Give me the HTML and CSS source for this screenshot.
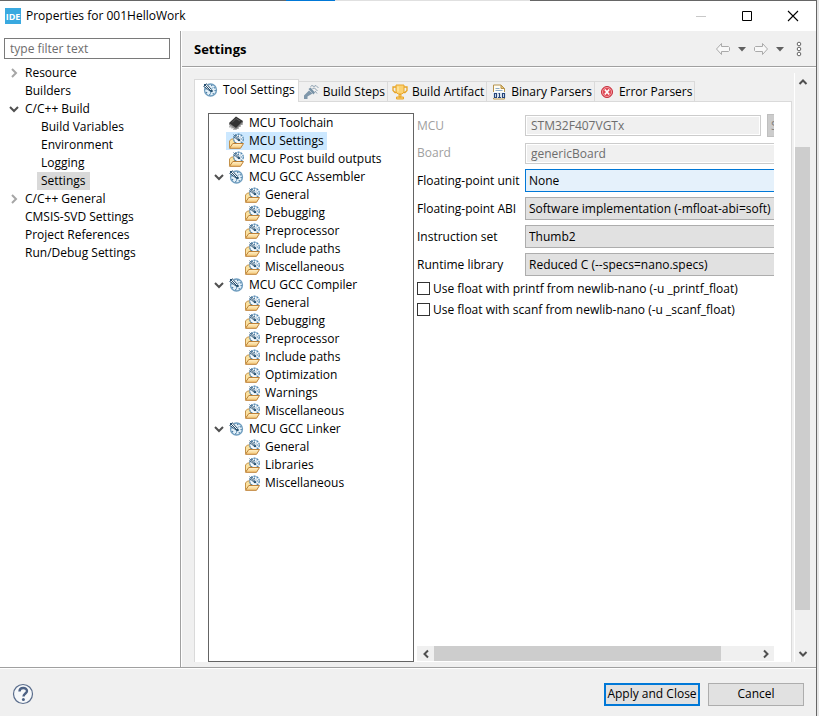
FILE: index.html
```html
<!DOCTYPE html>
<html lang="en">
<head>
    <meta charset="UTF-8">
    <meta name="viewport" content="width=device-width, initial-scale=1.0">
    <title>Properties for 001HelloWork</title>
    <link rel="stylesheet" href="styles.css">
</head>
<body>
    <!-- Icon definitions -->
    <svg class="defs" aria-hidden="true">
        <linearGradient id="paper" x1="0" y1="0" x2="0" y2="1">
            <stop offset="0" stop-color="#fff3cf"/>
            <stop offset="1" stop-color="#f6c876"/>
        </linearGradient>
        <symbol id="open" viewBox="0 0 10 10"><path d="M1 3l4 4 4-4" fill="none" stroke="#505050" stroke-width="2"/></symbol>
        <symbol id="closed" viewBox="0 0 10 10"><path d="M3 1l4 4-4 4" fill="none" stroke="#a6a6a6" stroke-width="2"/></symbol>
        <symbol id="up" viewBox="0 0 10 10"><path d="M1.500 7L5 3.500 8.500 7" fill="none" stroke="#505050" stroke-width="2"/></symbol>
        <symbol id="down" viewBox="0 0 10 10"><path d="M1.500 3L5 6.500 8.500 3" fill="none" stroke="#505050" stroke-width="2"/></symbol>
        <symbol id="left" viewBox="0 0 10 10"><path d="M7 1.500L3.500 5 7 8.500" fill="none" stroke="#505050" stroke-width="2"/></symbol>
        <symbol id="right" viewBox="0 0 10 10"><path d="M3 1.500L6.500 5 3 8.500" fill="none" stroke="#505050" stroke-width="2"/></symbol>
        <symbol id="caret" viewBox="0 0 8 5"><path d="M0 0h8L4 4.500z" fill="#606060"/></symbol>
        <symbol id="tool" viewBox="0 0 16 16">
            <circle cx="8.500" cy="8" r="6" fill="#e3f0f8" stroke="#6f9dbf" stroke-width="1.300"/>
            <circle cx="8.500" cy="8" r="4.700" fill="none" stroke="#4c7ea6" stroke-width="1.300" stroke-dasharray="1.200 2.500"/>
            <path d="M8.500 8l3-3M8.500 8v4" stroke="#7ba6c6"/>
            <path d="M1.500 1.500h3.500l5 6-1.500 1.500-7-5z" fill="#f4f8fa"/>
            <path d="M1.500 4.500l3-3M2 2l7.500 7.500M4.500 2l5 5.500M2 4.500l6 4.500" stroke="#274f70" fill="none"/>
            <circle cx="9.500" cy="9" r="1.300" fill="#24506f"/>
        </symbol>
        <symbol id="folder" viewBox="0 0 16 16">
            <path d="M1.500 14.500V8l2-2h3v7z" fill="#fbe2a1" stroke="#c4924a"/>
            <circle cx="10.500" cy="6" r="4.800" fill="#f4f9fd" stroke="#4881ad" stroke-width="1.200" stroke-dasharray="2.200 .8"/>
            <path d="M10.500 2.500V4M14 6h-1.500M13 3.500l-1 1M13 8.500l-1-1" stroke="#4c7ea6"/>
            <path d="M5.500 1.500l5.500 6M7.500 1.500l4 5M5.500 3.500l5 4" stroke="#274f70" stroke-width=".8"/>
            <circle cx="11" cy="7.200" r="1.100" fill="#24506f"/>
            <path d="M1.500 15.300l3.300-4.800h10.700l-3 4.800z" fill="url(#paper)" stroke="#bd8035"/>
        </symbol>
        <symbol id="chip" viewBox="0 0 16 16">
            <path d="M1 8v2l7 5 7-7V6z" fill="#8c8c8c"/>
            <path d="M1 8l7-6.500L15 6l-7 7z" fill="#343434"/>
            <path d="M4 7.500l4-4L12 6" fill="none" stroke="#626262"/>
            <path d="M2 11v1.500M4 12v1.500M6 13.500V15M10 12.500V14M12 10.500V12M14 8.500V10" stroke="#777"/>
        </symbol>
        <symbol id="steps" viewBox="0 0 16 16">
            <path d="M1 11.500l5-5 3.500 3-5 3v2.500H1z" fill="#7f97aa"/>
            <path d="M5.500 5l2-1.500 4.500 5-1.500 2z" fill="#7892a6"/>
            <path d="M7.500 2.500l1.500-1 2 1 2-1 2.500 2.500M9.500 4.500l2-.5 3 3M12 7l2 2.500" fill="none" stroke="#8da1b1"/>
        </symbol>
        <symbol id="trophy" viewBox="0 0 16 16">
            <path d="M4 3H1v3.500l2 2h2M12 3h3v3.500l-2 2h-2" fill="none" stroke="#e6a425" stroke-width="1.300"/>
            <path d="M4 1h8v7l-2 2H6L4 8z" fill="#fbd272" stroke="#e9a62a"/>
            <path d="M7 10.500h2v2.500H7zM4.500 13h7v2h-7z" fill="#fbd272" stroke="#e9a62a"/>
            <path d="M6 2.500v5" stroke="#fff0b8"/>
        </symbol>
        <symbol id="binary" viewBox="0 0 16 16">
            <path d="M2.500 1h7.500l3.500 3.500V15h-11z" fill="#fffdf4" stroke="#b7944d"/>
            <path d="M10 1v3.500h3.500z" fill="#eac877" stroke="#b7944d"/>
            <path d="M4.500 4.500h4M4.500 6.500h7" stroke="#8eabc8"/>
            <path d="M2 8h13v6H2z" fill="#edf3fa"/>
            <path d="M3.500 9.500h2v4h-2zM11.500 9.500h2v4h-2zM7.500 9.500h1V14M7 13.500h3" fill="none" stroke="#26457a" stroke-width="1.200"/>
        </symbol>
        <symbol id="error" viewBox="0 0 16 16">
            <circle cx="8" cy="8" r="5.500" fill="#df4652" stroke="#c5303d"/>
            <circle cx="8" cy="8" r="4.500" fill="none" stroke="#f39aa0"/>
            <path d="M5.800 5.500l4.400 5M10.200 5.500l-4.400 5" stroke="#fff" stroke-width="1.700"/>
        </symbol>
    </svg>

    <div class="window">
        <div class="top-edge"></div>

        <header class="titlebar">
            <svg class="logo" viewBox="0 0 16 16">
                <rect width="16" height="16" fill="#39a9e0"/>
                <text x="8" y="12" text-anchor="middle">IDE</text>
            </svg>
            <h1>Properties for 001HelloWork</h1>
            <button class="win-btn" aria-label="Minimize" disabled><svg viewBox="0 0 12 12"><path d="M1 6.500h10" stroke="#c8c8c8"/></svg></button>
            <button class="win-btn" aria-label="Maximize"><svg viewBox="0 0 12 12"><path d="M1.500 1.500h9v9h-9z" fill="none" stroke="#000"/></svg></button>
            <button class="win-btn" aria-label="Close"><svg viewBox="0 0 12 12"><path d="M1 1l10 10M11 1L1 11" stroke="#000" stroke-width="1.100"/></svg></button>
        </header>

        <div class="content">
            <nav class="sidebar">
                <input class="filter" type="text" placeholder="type filter text" aria-label="Filter">
                <ul class="tree pages">
                    <li><div class="row"><svg class="toggle"><use href="#closed"/></svg><a class="item" href="#">Resource</a></div></li>
                    <li><div class="row"><span class="toggle"></span><a class="item" href="#">Builders</a></div></li>
                    <li>
                        <div class="row"><svg class="toggle"><use href="#open"/></svg><a class="item" href="#">C/C++ Build</a></div>
                        <ul>
                            <li><div class="row"><span class="toggle"></span><a class="item" href="#">Build Variables</a></div></li>
                            <li><div class="row"><span class="toggle"></span><a class="item" href="#">Environment</a></div></li>
                            <li><div class="row"><span class="toggle"></span><a class="item" href="#">Logging</a></div></li>
                            <li><div class="row"><span class="toggle"></span><a class="item current" href="#">Settings</a></div></li>
                        </ul>
                    </li>
                    <li><div class="row"><svg class="toggle"><use href="#closed"/></svg><a class="item" href="#">C/C++ General</a></div></li>
                    <li><div class="row"><span class="toggle"></span><a class="item" href="#">CMSIS-SVD Settings</a></div></li>
                    <li><div class="row"><span class="toggle"></span><a class="item" href="#">Project References</a></div></li>
                    <li><div class="row"><span class="toggle"></span><a class="item" href="#">Run/Debug Settings</a></div></li>
                </ul>
            </nav>

            <main class="main">
                <div class="page-header">
                    <h2>Settings</h2>
                    <div class="history">
                        <button aria-label="Back"><svg width="16" height="14" viewBox="0 0 16 14"><path d="M1.500 7l5-5.500v3h7l1 1v3l-1 1h-7v3z" fill="#f8f8f8" stroke="#aaa"/></svg></button>
                        <button aria-label="Back history"><svg width="8" height="5"><use href="#caret"/></svg></button>
                        <button aria-label="Forward"><svg width="16" height="14" viewBox="0 0 16 14"><path d="M14.500 7l-5-5.500v3h-7l-1 1v3l1 1h7v3z" fill="#f8f8f8" stroke="#aaa"/></svg></button>
                        <button aria-label="Forward history"><svg width="8" height="5"><use href="#caret"/></svg></button>
                        <button class="more" aria-label="View menu"><svg width="6" height="16" viewBox="0 0 6 16"><g fill="#fff" stroke="#666"><circle cx="3" cy="3" r="1.800"/><circle cx="3" cy="8" r="1.800"/><circle cx="3" cy="13" r="1.800"/></g></svg></button>
                    </div>
                </div>

                <div class="page-body">
                    <section class="notebook">
                        <div class="tabs" role="tablist">
                            <button class="tab active" role="tab" aria-selected="true"><svg><use href="#tool"/></svg>Tool Settings</button>
                            <button class="tab" role="tab"><svg><use href="#steps"/></svg>Build Steps</button>
                            <button class="tab" role="tab"><svg><use href="#trophy"/></svg>Build Artifact</button>
                            <button class="tab" role="tab"><svg><use href="#binary"/></svg>Binary Parsers</button>
                            <button class="tab" role="tab"><svg><use href="#error"/></svg>Error Parsers</button>
                        </div>

                        <div class="panel">
                            <ul class="tree tools">
                                <li><div class="row"><span class="toggle"></span><a class="item" href="#"><svg><use href="#chip"/></svg>MCU Toolchain</a></div></li>
                                <li><div class="row"><span class="toggle"></span><a class="item selected" href="#"><svg><use href="#folder"/></svg>MCU Settings</a></div></li>
                                <li><div class="row"><span class="toggle"></span><a class="item" href="#"><svg><use href="#folder"/></svg>MCU Post build outputs</a></div></li>
                                <li>
                                    <div class="row"><svg class="toggle"><use href="#open"/></svg><a class="item" href="#"><svg><use href="#tool"/></svg>MCU GCC Assembler</a></div>
                                    <ul>
                                        <li><div class="row"><span class="toggle"></span><a class="item" href="#"><svg><use href="#folder"/></svg>General</a></div></li>
                                        <li><div class="row"><span class="toggle"></span><a class="item" href="#"><svg><use href="#folder"/></svg>Debugging</a></div></li>
                                        <li><div class="row"><span class="toggle"></span><a class="item" href="#"><svg><use href="#folder"/></svg>Preprocessor</a></div></li>
                                        <li><div class="row"><span class="toggle"></span><a class="item" href="#"><svg><use href="#folder"/></svg>Include paths</a></div></li>
                                        <li><div class="row"><span class="toggle"></span><a class="item" href="#"><svg><use href="#folder"/></svg>Miscellaneous</a></div></li>
                                    </ul>
                                </li>
                                <li>
                                    <div class="row"><svg class="toggle"><use href="#open"/></svg><a class="item" href="#"><svg><use href="#tool"/></svg>MCU GCC Compiler</a></div>
                                    <ul>
                                        <li><div class="row"><span class="toggle"></span><a class="item" href="#"><svg><use href="#folder"/></svg>General</a></div></li>
                                        <li><div class="row"><span class="toggle"></span><a class="item" href="#"><svg><use href="#folder"/></svg>Debugging</a></div></li>
                                        <li><div class="row"><span class="toggle"></span><a class="item" href="#"><svg><use href="#folder"/></svg>Preprocessor</a></div></li>
                                        <li><div class="row"><span class="toggle"></span><a class="item" href="#"><svg><use href="#folder"/></svg>Include paths</a></div></li>
                                        <li><div class="row"><span class="toggle"></span><a class="item" href="#"><svg><use href="#folder"/></svg>Optimization</a></div></li>
                                        <li><div class="row"><span class="toggle"></span><a class="item" href="#"><svg><use href="#folder"/></svg>Warnings</a></div></li>
                                        <li><div class="row"><span class="toggle"></span><a class="item" href="#"><svg><use href="#folder"/></svg>Miscellaneous</a></div></li>
                                    </ul>
                                </li>
                                <li>
                                    <div class="row"><svg class="toggle"><use href="#open"/></svg><a class="item" href="#"><svg><use href="#tool"/></svg>MCU GCC Linker</a></div>
                                    <ul>
                                        <li><div class="row"><span class="toggle"></span><a class="item" href="#"><svg><use href="#folder"/></svg>General</a></div></li>
                                        <li><div class="row"><span class="toggle"></span><a class="item" href="#"><svg><use href="#folder"/></svg>Libraries</a></div></li>
                                        <li><div class="row"><span class="toggle"></span><a class="item" href="#"><svg><use href="#folder"/></svg>Miscellaneous</a></div></li>
                                    </ul>
                                </li>
                            </ul>

                            <div class="options">
                                <form class="form">
                                    <div class="fields">
                                        <label class="dim" for="mcu">MCU</label>
                                        <div class="with-button">
                                            <input id="mcu" type="text" value="STM32F407VGTx" disabled>
                                            <button type="button" disabled>Select</button>
                                        </div>
                                        <label class="dim" for="board">Board</label>
                                        <input id="board" type="text" value="genericBoard" disabled>
                                        <label for="fpu">Floating-point unit</label>
                                        <select id="fpu" class="hot"><option>None</option></select>
                                        <label for="abi">Floating-point ABI</label>
                                        <select id="abi"><option>Software implementation (-mfloat-abi=soft)</option></select>
                                        <label for="iset">Instruction set</label>
                                        <select id="iset"><option>Thumb2</option></select>
                                        <label for="runtime">Runtime library</label>
                                        <select id="runtime"><option>Reduced C (--specs=nano.specs)</option></select>
                                    </div>
                                    <label class="check"><input type="checkbox">Use float with printf from newlib-nano (-u _printf_float)</label>
                                    <label class="check"><input type="checkbox">Use float with scanf from newlib-nano (-u _scanf_float)</label>
                                </form>
                                <div class="scroll horizontal">
                                    <button aria-label="Scroll left"><svg><use href="#left"/></svg></button>
                                    <div class="track"><div class="thumb"></div></div>
                                    <button aria-label="Scroll right"><svg><use href="#right"/></svg></button>
                                </div>
                            </div>
                        </div>
                    </section>

                    <div class="scroll vertical">
                        <button aria-label="Scroll up"><svg><use href="#up"/></svg></button>
                        <div class="track"><div class="thumb"></div></div>
                        <button aria-label="Scroll down"><svg><use href="#down"/></svg></button>
                    </div>
                </div>
            </main>
        </div>

        <footer class="footer">
            <button class="help" aria-label="Help">
                <svg viewBox="0 0 22 22">
                    <circle cx="11" cy="11" r="9.500" fill="#f6f8fa" stroke="#5a6d8c" stroke-width="1.200"/>
                    <path d="M7.500 8.500c0-4.500 7.500-4.500 7.500-.5 0 2.500-3.500 2.500-3.500 5.500" fill="none" stroke="#4d6285" stroke-width="2.400"/>
                    <circle cx="11.400" cy="16.500" r="1.500" fill="#4d6285"/>
                </svg>
            </button>
            <button class="btn primary">Apply and Close</button>
            <button class="btn">Cancel</button>
        </footer>
    </div>
</body>
</html>
```

FILE: styles.css
```css
* {
    box-sizing: border-box;
}

body {
    margin: 0;
    background: #e6e6e6;
    color: #000;
    font-family: "Open Sans", "Noto Sans", sans-serif;
    font-size: 12px;
    line-height: 18px;
}

button, input, select {
    margin: 0;
    font: inherit;
    color: inherit;
    border-radius: 0;
}

button {
    padding: 0;
    border: none;
    background: none;
}

svg {
    display: block;
    flex: none;
}

ul {
    list-style: none;
    margin: 0;
    padding: 0;
}

.defs {
    position: absolute;
    width: 0;
    height: 0;
}

.window {
    display: flex;
    flex-direction: column;
    min-height: 100vh;
    margin-right: 2px;
    border-right: 1px solid #666;
    background: #f0f0f0;
}

.top-edge {
    height: 1px;
    background: linear-gradient(to right, #666 35%, #0078d7 35%, #0078d7 41%, #e0e0e0 41%, #e0e0e0 65%, #666 65%);
}

/* Title bar */
.titlebar {
    display: flex;
    align-items: center;
    height: 30px;
    padding-left: 5px;
    background: #fff;
}

.titlebar h1 {
    flex: 1;
    margin: 0 0 0 5px;
    font-size: 12px;
    font-weight: normal;
}

.logo {
    width: 16px;
    height: 16px;
}

.logo text {
    font-size: 9px;
    font-weight: bold;
    fill: #fff;
}

.win-btn {
    display: flex;
    align-items: center;
    justify-content: center;
    width: 46px;
    height: 30px;
}

.win-btn svg {
    width: 12px;
    height: 12px;
}

/* Trees */
.content {
    display: flex;
    flex: 1;
}

.sidebar {
    width: 181px;
    padding: 7px 10px 0 4px;
    border-right: 1px solid #a0a0a0;
    background: #fff;
}

.filter {
    display: block;
    width: 100%;
    height: 21px;
    margin-bottom: 5px;
    padding: 0 5px;
    border: 1px solid #7a7a7a;
    outline: none;
}

.filter::placeholder {
    color: #6d6d6d;
}

.row {
    display: flex;
    align-items: center;
    height: 18px;
}

.toggle {
    width: 10px;
    height: 10px;
    flex: none;
}

.tree ul {
    padding-left: 16px;
}

.item {
    display: flex;
    align-items: center;
    height: 18px;
    color: inherit;
    text-decoration: none;
    white-space: nowrap;
}

.pages .row {
    padding-left: 5px;
}

.pages .item {
    margin-left: 2px;
    padding: 0 4px;
}

.item.current {
    background: #d9d9d9;
}

.tools {
    width: 206px;
    flex: none;
    border: 1px solid #646464;
}

.tools .row {
    padding-left: 5px;
}

.tools .item {
    gap: 5px;
    margin-left: 2px;
    padding: 0 3px 0 2px;
}

.tools .item svg {
    width: 16px;
    height: 16px;
}

.item.selected {
    background: #cce8ff;
}

/* Settings page */
.main {
    display: flex;
    flex: 1;
    flex-direction: column;
    min-width: 0;
    border-left: 1px solid #fff;
}

.page-header {
    display: flex;
    align-items: center;
    justify-content: space-between;
    height: 36px;
    padding: 1px 14px 0 12px;
    border-bottom: 1px solid #a0a0a0;
    box-shadow: 0 1px 0 #fff;
}

.page-header h2 {
    margin: 0;
    font-size: 13px;
    font-weight: bold;
}

.history {
    display: flex;
    align-items: center;
    gap: 7px;
}

.history .more {
    margin-left: 5px;
}

.page-body {
    display: flex;
    flex: 1;
    gap: 2px;
    padding: 6px 6px 5px 12px;
}

.notebook {
    display: flex;
    flex: 1;
    flex-direction: column;
    min-width: 0;
    padding-top: 6px;
}

.tabs {
    display: flex;
    align-items: flex-end;
    height: 23px;
    box-shadow: inset 0 -1px 0 #dadada;
}

.tab {
    display: flex;
    align-items: center;
    gap: 4px;
    height: 21px;
    padding: 0 2px 0 4px;
    border: 1px solid #dadada;
    border-left: none;
    white-space: nowrap;
}

.tab svg {
    width: 16px;
    height: 16px;
}

.tab.active {
    gap: 5px;
    height: 23px;
    padding: 0 3px 2px 7px;
    border-left: 1px solid #dadada;
    border-bottom: none;
    background: #fff;
}

.panel {
    display: flex;
    flex: 1;
    gap: 3px;
    padding: 11px 17px 0 13px;
    border: 1px solid #dadada;
    border-top: none;
    border-bottom: none;
    background: #fff;
}

.options {
    display: flex;
    flex: 1;
    flex-direction: column;
    min-width: 0;
}

.form {
    flex: 1;
    padding-top: 1px;
    overflow: hidden;
}

.fields {
    display: grid;
    grid-template-columns: 108px 1fr;
    grid-template-rows: 23px 22px repeat(4, 23px);
    row-gap: 5px;
    align-items: center;
    min-width: 400px;
    margin-bottom: 2px;
}

.fields label {
    white-space: nowrap;
}

.dim {
    color: #a0a0a0;
}

.fields input {
    width: 100%;
    min-width: 0;
    height: 21px;
    padding: 0 5px;
    border: 1px solid #ccc;
    background: #f0f0f0;
    box-shadow: inset 0 0 0 1px #fff;
    color: #6d6d6d;
}

.with-button {
    display: grid;
    grid-template-columns: 1fr 50px;
    gap: 6px;
    align-items: center;
}

.with-button button {
    height: 23px;
    padding-left: 3px;
    border: 1px solid #bfbfbf;
    background: #ccc;
    color: #838383;
    text-align: left;
}

.fields select {
    appearance: none;
    width: 100%;
    height: 23px;
    padding: 0 3px;
    border: 1px solid #adadad;
    background: #e1e1e1;
    outline: none;
}

.fields select.hot {
    border-color: #0078d7;
    background: #e5f1fb;
}

.check {
    display: flex;
    align-items: center;
    gap: 3px;
    height: 21px;
    white-space: nowrap;
}

.check input {
    appearance: none;
    width: 13px;
    height: 13px;
    border: 1px solid #333;
    background: #fff;
}

/* Scroll bars */
.scroll {
    display: flex;
    background: #f0f0f0;
}

.scroll button {
    display: flex;
    align-items: center;
    justify-content: center;
    width: 17px;
    height: 17px;
}

.scroll svg {
    width: 10px;
    height: 10px;
}

.track {
    flex: 1;
}

.thumb {
    background: #cdcdcd;
}

.horizontal {
    height: 15px;
    margin-bottom: 1px;
}

.horizontal button {
    height: 15px;
}

.horizontal .thumb {
    width: 89%;
    height: 15px;
}

.vertical {
    flex-direction: column;
    width: 16px;
    border-left: 1px solid #fff;
}

.vertical button {
    width: 15px;
}

.vertical .track {
    display: flex;
    flex-direction: column;
    padding: 57px 0 35px;
}

.vertical .thumb {
    flex: 1;
}

/* Footer */
.footer {
    display: flex;
    align-items: center;
    gap: 8px;
    height: 49px;
    padding: 4px 12px 0;
    border-top: 1px solid #a0a0a0;
    box-shadow: inset 0 1px 0 #fff;
}

.help {
    margin-right: auto;
}

.help svg {
    width: 22px;
    height: 22px;
}

.btn {
    width: 96px;
    height: 23px;
    border: 1px solid #adadad;
    background: #e1e1e1;
    white-space: nowrap;
}

.btn.primary {
    border: 2px solid #0078d7;
}
```
